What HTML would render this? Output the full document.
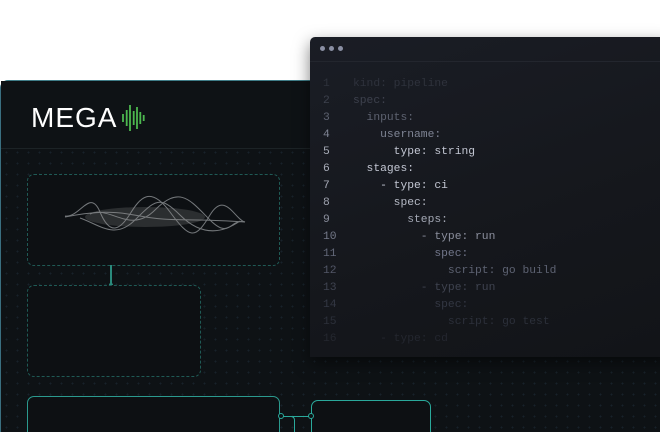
<!DOCTYPE html>
<html><head><style>
html,body{margin:0;width:660px;height:432px;overflow:hidden}
body{background:#fff;position:relative;font-family:"Liberation Sans",sans-serif}
.panel{position:absolute;left:0;top:80px;width:680px;height:360px;border-radius:8px 0 0 0;border-top:1.5px solid #3f7d88;border-left:1.5px solid #3a6f80;box-sizing:border-box;
background-image:radial-gradient(circle,#18222a 0.8px,transparent 1px);background-size:11px 11px;background-color:#0e1215}
.hdr{position:absolute;left:0;top:0;width:330px;height:67px;background:#0e1215;border-bottom:1px solid #1c2326}
.logo{position:absolute;left:30px;top:21px;color:#fff;font-size:28px;letter-spacing:1px}
.box{position:absolute;box-sizing:border-box;border-radius:7px;background:#0d1013}
.code{position:absolute;left:310px;top:37px;width:360px;height:320px;overflow:hidden;background:linear-gradient(160deg,#1a1d25,#15171c 60%,#121418);border-radius:5px 0 0 0;box-shadow:0 6px 16px rgba(0,0,0,.5)}
.bar{height:24px;border-bottom:1px solid #23262e}
.dot{position:absolute;top:9px;width:5px;height:5px;border-radius:50%;background:#8a8fa3}
.ln{position:absolute;font-family:"Liberation Mono",monospace;font-size:11.3px;white-space:pre;line-height:17px}
</style></head><body>
<div class="panel">
 <div class="hdr"><div class="logo">MEGA</div>
 <svg style="position:absolute;left:120px;top:22px" width="28" height="30"><g stroke="#4cb84f" stroke-width="1.8">
 <line x1="2" y1="11" x2="2" y2="19"/><line x1="5.7" y1="7" x2="5.7" y2="23"/><line x1="9" y1="2" x2="9" y2="28"/><line x1="12.7" y1="8" x2="12.7" y2="22"/><line x1="16" y1="4" x2="16" y2="26"/><line x1="19.3" y1="9" x2="19.3" y2="21"/><line x1="22.7" y1="12" x2="22.7" y2="18"/></g></svg>
 </div>
</div>
<div class="box" style="left:27px;top:174px;width:253px;height:92px;border:1px dashed #1f5a55"></div>
<svg style="position:absolute;left:60px;top:190px" width="190" height="60"><g fill="none" stroke="#c9cdd0" stroke-width="1" opacity=".55">
<path d="M5 26 C20 28 30 -2 40 22 S60 40 70 24 S90 -5 110 22 S135 50 150 25 S175 30 185 32"/>
<path d="M5 27 C30 22 50 20 80 26 S130 28 185 32"/>
<path d="M20 28 C40 35 55 50 75 30 S100 5 120 25 S160 45 180 31"/>
<path d="M30 24 C50 15 70 45 95 20 S130 10 150 30 S170 28 185 32"/></g>
<ellipse cx="85" cy="27" rx="60" ry="10" fill="#888" opacity=".25"/></svg>
<div style="position:absolute;left:110px;top:265px;width:1.5px;height:20px;background:#2a8a7c"></div>
<div style="position:absolute;left:108.5px;top:283px;width:4px;height:4px;border-radius:50%;background:#2a8a7c"></div>
<div class="box" style="left:27px;top:285px;width:174px;height:92px;border:1px dashed #1f5a55"></div>
<div class="box" style="left:27px;top:396px;width:253px;height:50px;border:1px solid #2b9a8e"></div>
<div class="box" style="left:311px;top:400px;width:120px;height:40px;border:1px solid #2aa99b"></div>
<div style="position:absolute;left:280px;top:415.5px;width:31px;height:1px;background:#2aa99b"></div>
<div style="position:absolute;left:278px;top:413px;width:4px;height:4px;border:1px solid #2aa99b;border-radius:50%;background:#0d1013"></div>
<div style="position:absolute;left:308px;top:413px;width:4px;height:4px;border:1px solid #2aa99b;border-radius:50%;background:#0d1013"></div>
<div style="position:absolute;left:287px;top:416px;width:7px;height:20px;border-top:1px solid #2aa99b;border-right:1px solid #2aa99b;border-radius:0 4px 0 0"></div>
<div class="code"><div class="bar"></div>
<div class="dot" style="left:10px"></div><div class="dot" style="left:19px"></div><div class="dot" style="left:28px"></div>
<div class="ln" style="top:39px;left:43px"><span style="color:#2e323c">kind: pipeline</span>
<span style="color:#3d414d">spec:</span>
<span style="color:#5d6270">  inputs:</span>
<span style="color:#7f8494">    username:</span>
<span style="color:#c3c7d3">      type: string</span>
<span style="color:#c3c7d3">  stages:</span>
<span style="color:#c3c7d3">    - type: ci</span>
<span style="color:#b6bac6">      spec:</span>
<span style="color:#a3a7b4">        steps:</span>
<span style="color:#8c909e">          - type: run</span>
<span style="color:#71768a">            spec:</span>
<span style="color:#5d6272">              script: go build</span>
<span style="color:#3f4350">          - type: run</span>
<span style="color:#333743">            spec:</span>
<span style="color:#2c303a">              script: go test</span>
<span style="color:#24272f">    - type: cd</span></div>
<div class="ln" style="top:39px;left:13px"><span style="color:#2e323c">1</span>
<span style="color:#3d414d">2</span>
<span style="color:#5d6270">3</span>
<span style="color:#7f8494">4</span>
<span style="color:#a8acb8">5</span>
<span style="color:#a8acb8">6</span>
<span style="color:#a8acb8">7</span>
<span style="color:#9ea2ae">8</span>
<span style="color:#8a8e9c">9</span>
<span style="color:#737888">10</span>
<span style="color:#626778">11</span>
<span style="color:#525666">12</span>
<span style="color:#3f4350">13</span>
<span style="color:#333743">14</span>
<span style="color:#2c303a">15</span>
<span style="color:#24272f">16</span></div>
</div>
</body></html>
